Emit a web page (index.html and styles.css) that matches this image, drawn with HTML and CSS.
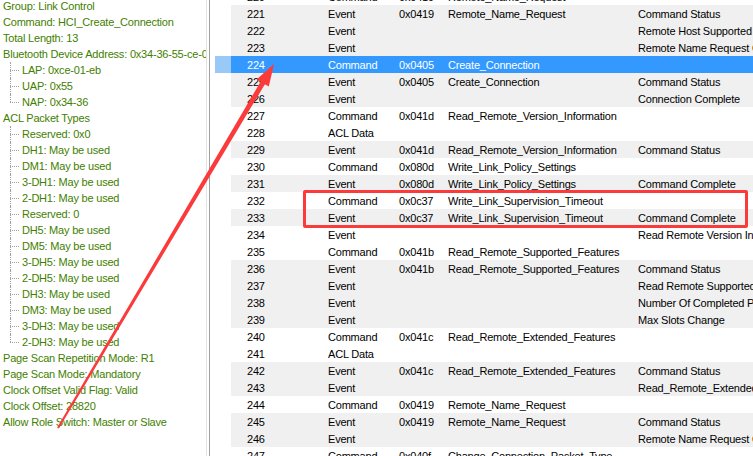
FILE: index.html
```html
<!DOCTYPE html>
<html>
<head>
<meta charset="utf-8">
<link rel="stylesheet" href="styles.css">
</head>
<body>
<div class="app">
  <div class="tree">
    <div class="item">Group: Link Control</div>
    <div class="item">Command: HCI_Create_Connection</div>
    <div class="item">Total Length: 13</div>
    <div class="item">Bluetooth Device Address: 0x34-36-55-ce-01-eb</div>
    <div class="children">
      <div class="child">LAP: 0xce-01-eb</div>
      <div class="child">UAP: 0x55</div>
      <div class="child">NAP: 0x34-36</div>
    </div>
    <div class="item">ACL Packet Types</div>
    <div class="children">
      <div class="child">Reserved: 0x0</div>
      <div class="child">DH1: May be used</div>
      <div class="child">DM1: May be used</div>
      <div class="child">3-DH1: May be used</div>
      <div class="child">2-DH1: May be used</div>
      <div class="child">Reserved: 0</div>
      <div class="child">DH5: May be used</div>
      <div class="child">DM5: May be used</div>
      <div class="child">3-DH5: May be used</div>
      <div class="child">2-DH5: May be used</div>
      <div class="child">DH3: May be used</div>
      <div class="child">DM3: May be used</div>
      <div class="child">3-DH3: May be used</div>
      <div class="child">2-DH3: May be used</div>
    </div>
    <div class="item">Page Scan Repetition Mode: R1</div>
    <div class="item">Page Scan Mode: Mandatory</div>
    <div class="item">Clock Offset Valid Flag: Valid</div>
    <div class="item">Clock Offset: 28820</div>
    <div class="item">Allow Role Switch: Master or Slave</div>
  </div>
  <div class="splitter"></div>
  <div class="list">
    <div class="row"><div class="gut"></div><div class="cells"><span>220</span><span>Command</span><span>0x0419</span><span>Remote_Name_Request</span><span></span></div></div>
    <div class="row alt"><div class="gut"></div><div class="cells"><span>221</span><span>Event</span><span>0x0419</span><span>Remote_Name_Request</span><span>Command Status</span></div></div>
    <div class="row alt"><div class="gut"></div><div class="cells"><span>222</span><span>Event</span><span></span><span></span><span>Remote Host Supported Features Notification</span></div></div>
    <div class="row alt"><div class="gut"></div><div class="cells"><span>223</span><span>Event</span><span></span><span></span><span>Remote Name Request Complete</span></div></div>
    <div class="row sel"><div class="gut"></div><div class="cells"><span>224</span><span>Command</span><span>0x0405</span><span>Create_Connection</span><span></span></div></div>
    <div class="row alt"><div class="gut"></div><div class="cells"><span>225</span><span>Event</span><span>0x0405</span><span>Create_Connection</span><span>Command Status</span></div></div>
    <div class="row alt"><div class="gut"></div><div class="cells"><span>226</span><span>Event</span><span></span><span></span><span>Connection Complete</span></div></div>
    <div class="row"><div class="gut"></div><div class="cells"><span>227</span><span>Command</span><span>0x041d</span><span>Read_Remote_Version_Information</span><span></span></div></div>
    <div class="row"><div class="gut"></div><div class="cells"><span>228</span><span>ACL Data</span><span></span><span></span><span></span></div></div>
    <div class="row alt"><div class="gut"></div><div class="cells"><span>229</span><span>Event</span><span>0x041d</span><span>Read_Remote_Version_Information</span><span>Command Status</span></div></div>
    <div class="row"><div class="gut"></div><div class="cells"><span>230</span><span>Command</span><span>0x080d</span><span>Write_Link_Policy_Settings</span><span></span></div></div>
    <div class="row alt"><div class="gut"></div><div class="cells"><span>231</span><span>Event</span><span>0x080d</span><span>Write_Link_Policy_Settings</span><span>Command Complete</span></div></div>
    <div class="row"><div class="gut"></div><div class="cells"><span>232</span><span>Command</span><span>0x0c37</span><span>Write_Link_Supervision_Timeout</span><span></span></div></div>
    <div class="row alt"><div class="gut"></div><div class="cells"><span>233</span><span>Event</span><span>0x0c37</span><span>Write_Link_Supervision_Timeout</span><span>Command Complete</span></div></div>
    <div class="row"><div class="gut"></div><div class="cells"><span>234</span><span>Event</span><span></span><span></span><span>Read Remote Version Information Complete</span></div></div>
    <div class="row"><div class="gut"></div><div class="cells"><span>235</span><span>Command</span><span>0x041b</span><span>Read_Remote_Supported_Features</span><span></span></div></div>
    <div class="row alt"><div class="gut"></div><div class="cells"><span>236</span><span>Event</span><span>0x041b</span><span>Read_Remote_Supported_Features</span><span>Command Status</span></div></div>
    <div class="row alt"><div class="gut"></div><div class="cells"><span>237</span><span>Event</span><span></span><span></span><span>Read Remote Supported Features Complete</span></div></div>
    <div class="row alt"><div class="gut"></div><div class="cells"><span>238</span><span>Event</span><span></span><span></span><span>Number Of Completed Packets</span></div></div>
    <div class="row alt"><div class="gut"></div><div class="cells"><span>239</span><span>Event</span><span></span><span></span><span>Max Slots Change</span></div></div>
    <div class="row"><div class="gut"></div><div class="cells"><span>240</span><span>Command</span><span>0x041c</span><span>Read_Remote_Extended_Features</span><span></span></div></div>
    <div class="row"><div class="gut"></div><div class="cells"><span>241</span><span>ACL Data</span><span></span><span></span><span></span></div></div>
    <div class="row alt"><div class="gut"></div><div class="cells"><span>242</span><span>Event</span><span>0x041c</span><span>Read_Remote_Extended_Features</span><span>Command Status</span></div></div>
    <div class="row alt"><div class="gut"></div><div class="cells"><span>243</span><span>Event</span><span></span><span></span><span>Read_Remote_Extended_Features_Complete</span></div></div>
    <div class="row"><div class="gut"></div><div class="cells"><span>244</span><span>Command</span><span>0x0419</span><span>Remote_Name_Request</span><span></span></div></div>
    <div class="row alt"><div class="gut"></div><div class="cells"><span>245</span><span>Event</span><span>0x0419</span><span>Remote_Name_Request</span><span>Command Status</span></div></div>
    <div class="row alt"><div class="gut"></div><div class="cells"><span>246</span><span>Event</span><span></span><span></span><span>Remote Name Request Complete</span></div></div>
    <div class="row"><div class="gut"></div><div class="cells"><span>247</span><span>Command</span><span>0x040f</span><span>Change_Connection_Packet_Type</span><span></span></div></div>
  </div>
  <div class="redbox"></div>
  <svg class="arrow" width="753" height="456" viewBox="0 0 753 456">
    <polygon points="274,64 268.8,86.5 264.9,84.2 58.9,428.5 57.1,427.5 260.7,81.6 256.8,79.3" fill="#fb3b3b"/>
  </svg>
</div>
</body>
</html>
```
FILE: styles.css
```css
html, body {
  margin: 0;
  padding: 0;
  background: #ffffff;
}
.app {
  position: relative;
  width: 753px;
  height: 456px;
  overflow: hidden;
  display: flex;
  font-family: "Liberation Sans", Arial, sans-serif;
  font-size: 11px;
  letter-spacing: -0.2px;
}
.tree {
  width: 206px;
  flex: none;
  overflow: hidden;
  margin-top: -2px;
  color: #3f8000;
  line-height: 16px;
  white-space: nowrap;
}
.item {
  padding-left: 3px;
  height: 16px;
}
.child {
  position: relative;
  padding-left: 22px;
  height: 16px;
}
.child::before {
  content: "";
  position: absolute;
  left: 10px;
  top: 8px;
  width: 9px;
  border-top: 1px dotted #a0a0a0;
}
.child::after {
  content: "";
  position: absolute;
  left: 10px;
  top: 0;
  height: 16px;
  border-left: 1px dotted #a0a0a0;
}
.child:last-child::after {
  height: 8px;
}
.splitter {
  flex: none;
  width: 2px;
  border-left: 1px solid #e2e2e2;
  border-right: 1px solid #a0a0a0;
  background: #ffffff;
}
.list {
  flex: 1;
  min-width: 0;
  margin-top: -12px;
  padding-left: 5px;
  color: #000000;
}
.row {
  display: flex;
  height: 17px;
  white-space: nowrap;
}
.gut {
  width: 16px;
  flex: none;
}
.cells {
  flex: 1;
  min-width: 0;
  display: grid;
  grid-template-columns: 97px 71px 49px 190px 1fr;
  overflow: hidden;
}
.cells span {
  overflow: hidden;
  padding-top: 1px;
  line-height: 16px;
}
.cells span:first-child {
  padding-left: 16px;
}
.alt .cells {
  background: #f0f0f0;
}
.sel .gut {
  background: #99c9f7;
}
.sel .cells {
  background: #3399ff;
  color: #ffffff;
}
.redbox {
  position: absolute;
  left: 303px;
  top: 190px;
  width: 445px;
  height: 38px;
  box-sizing: border-box;
  border: 3px solid #fb3b3b;
  border-radius: 2px;
}
.arrow {
  position: absolute;
  left: 0;
  top: 0;
}
```
